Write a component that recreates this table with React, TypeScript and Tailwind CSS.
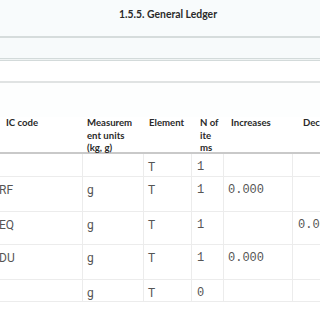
const rows = [
  { code: '', unit: '', el: 'T', n: '1', inc: '', dec: '', h: 'h-[23px]' },
  { code: 'RF', unit: 'g', el: 'T', n: '1', inc: '0.000', dec: '', h: 'h-[35px]' },
  { code: 'EQ', unit: 'g', el: 'T', n: '1', inc: '', dec: '0.000', h: 'h-[33px]' },
  { code: 'DU', unit: 'g', el: 'T', n: '1', inc: '0.000', dec: '', h: 'h-[35px]' },
  { code: '', unit: 'g', el: 'T', n: '0', inc: '', dec: '', h: 'h-[22px]' },
];

const hdr = "font-['Lato','Liberation_Sans',sans-serif] font-bold text-[9.6px] leading-[12.5px] text-[#2a2a2a] shrink-0";
const sans = "font-['Roboto','Liberation_Sans',sans-serif] text-[12px] text-[#555] shrink-0";
const mono = "font-['Liberation_Mono','DejaVu_Sans_Mono',monospace] text-[12px] text-[#555] shrink-0";

export default function App() {
  return (
    <div className="w-[320px] h-[320px] overflow-hidden bg-white">
      <div className="h-[36px] bg-[#f8fbfc] flex justify-center pt-[8px] pl-[16px]">
        <span className={hdr + " text-[10.4px] text-[#1a1a1a]"}>1.5.5. General Ledger</span>
      </div>
      <div className="h-[2px] bg-[#d6dcdc]" />
      <div className="h-[20px] bg-[#f7fafb]" />
      <div className="h-[1px] bg-[#d3dada]" />
      <div className="h-[1px] bg-[#f0f4f4]" />
      <div className="h-[1px] bg-[#d3dada]" />
      <div className="h-[20px] bg-white" />
      <div className="h-[2px] bg-[#e0e3e3]" />
      <div className="h-[34px] bg-[#fdfefe]" />

      <div className="flex h-[37px] border-b-2 border-[#c9c9c9]">
        <div className={hdr + " w-[83px] pl-[6px]"}>IC code</div>
        <div className={hdr + " w-[61px] pl-[4px]"}>Measurem<br />ent units<br />(kg, g)</div>
        <div className={hdr + " w-[48px] pl-[5px]"}>Element</div>
        <div className={hdr + " w-[32px] pl-[8px]"}>N of<br />ite<br />ms</div>
        <div className={hdr + " w-[69px] pl-[7px]"}>Increases</div>
        <div className={hdr + " w-[40px] pl-[10px]"}>Dec</div>
      </div>

      {rows.map((r, i) => (
        <div key={i} className={"flex border-b border-[#ececec] " + r.h}>
          <div className={sans + " w-[83px] pt-[4px] -ml-[1px]"}>{r.code}</div>
          <div className={sans + " w-[61px] pt-[4px] pl-[4px] border-l border-[#ececec]"}>{r.unit}</div>
          <div className={sans + " w-[48px] pt-[4px] pl-[4px] border-l border-[#ececec]"}>{r.el}</div>
          <div className={mono + " w-[32px] pt-[4px] pl-[5px] border-l border-[#ececec]"}>{r.n}</div>
          <div className={mono + " w-[69px] pt-[4px] pl-[4px] border-l border-[#ececec]"}>{r.inc}</div>
          <div className={mono + " w-[60px] pt-[4px] pl-[5px] border-l border-[#ececec] whitespace-nowrap"}>{r.dec}</div>
        </div>
      ))}
    </div>
  );
}
